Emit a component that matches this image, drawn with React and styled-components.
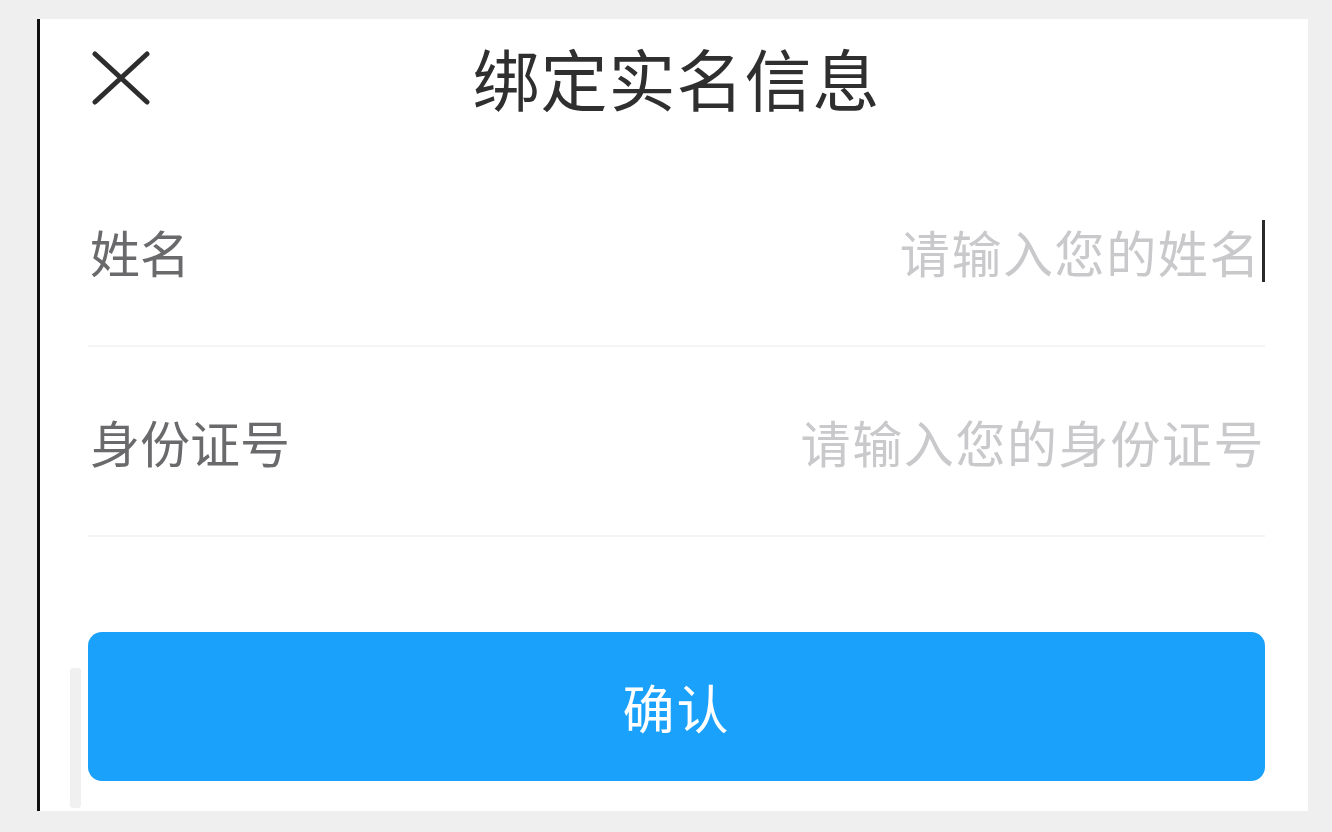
import React from "react";
import styled, { createGlobalStyle } from "styled-components";

const Global = createGlobalStyle`
  html, body { margin: 0; padding: 0; background: #efefef; }
  body { font-family: "Noto Sans CJK SC", "Noto Sans", sans-serif; }
`;

const Page = styled.div`
  width: 1332px;
  height: 832px;
  padding: 19px 24px 21px 37px;
  box-sizing: border-box;
`;

const Panel = styled.div`
  position: relative;
  height: 792px;
  background: #ffffff;
  border-left: 3px solid #111;
  box-sizing: border-box;
  padding: 0 43px 0 48px;
  display: flex;
  flex-direction: column;
`;

const ScrollTrace = styled.div`
  position: absolute;
  left: 30px;
  top: 649px;
  width: 11px;
  height: 140px;
  background: #f0f0f0;
  border-radius: 3px;
`;

const Header = styled.div`
  position: relative;
  height: 114px;
  padding-bottom: 8px;
  display: flex;
  align-items: center;
  justify-content: center;
`;

const Close = styled.button`
  position: absolute;
  left: 4px;
  top: 32px;
  width: 58px;
  height: 54px;
  padding: 0;
  border: none;
  background: transparent;
  display: flex;
  align-items: center;
  justify-content: center;
`;

const Title = styled.h1`
  margin: 0;
  font-size: 67px;
  font-weight: 400;
  color: #2f2f2f;
  letter-spacing: 1px;
  line-height: 1;
`;

const Fields = styled.div`
  margin-top: 16px;
  display: flex;
  flex-direction: column;
`;

const Row = styled.div`
  height: 188px;
  display: flex;
  align-items: center;
  justify-content: space-between;
  border-bottom: 2px solid #f4f4f6;
  box-sizing: content-box;
  padding-left: 2px;
`;

const Label = styled.span`
  font-size: 50px;
  color: #6a6a6c;
  line-height: 1;
`;

const Placeholder = styled.span`
  display: flex;
  align-items: center;
  font-size: 50px;
  color: #c9c9cc;
  line-height: 1;
  letter-spacing: 1.6px;
`;

const Caret = styled.span`
  display: inline-block;
  width: 3px;
  height: 62px;
  margin-left: 1px;
  background: #2a2a2a;
`;

const Confirm = styled.button`
  margin-top: 95px;
  height: 149px;
  width: 100%;
  border: none;
  border-radius: 14px;
  background: #1aa1fb;
  color: #ffffff;
  font-family: "Noto Sans CJK SC", "Noto Sans", sans-serif;
  font-size: 52px;
  letter-spacing: 2px;
  padding: 0;
`;

function CloseIcon() {
  return (
    <svg width="58" height="54" viewBox="0 0 58 54">
      <path d="M3 3 L55 51 M55 3 L3 51" stroke="#2d2d2d" strokeWidth="5" strokeLinecap="round" />
    </svg>
  );
}

export default function App() {
  return (
    <>
      <Global />
      <Page>
        <Panel>
          <ScrollTrace />
          <Header>
            <Close aria-label="关闭">
              <CloseIcon />
            </Close>
            <Title>绑定实名信息</Title>
          </Header>
          <Fields>
            <Row>
              <Label>姓名</Label>
              <Placeholder>
                请输入您的姓名
                <Caret />
              </Placeholder>
            </Row>
            <Row>
              <Label>身份证号</Label>
              <Placeholder>请输入您的身份证号</Placeholder>
            </Row>
          </Fields>
          <Confirm>确认</Confirm>
        </Panel>
      </Page>
    </>
  );
}
